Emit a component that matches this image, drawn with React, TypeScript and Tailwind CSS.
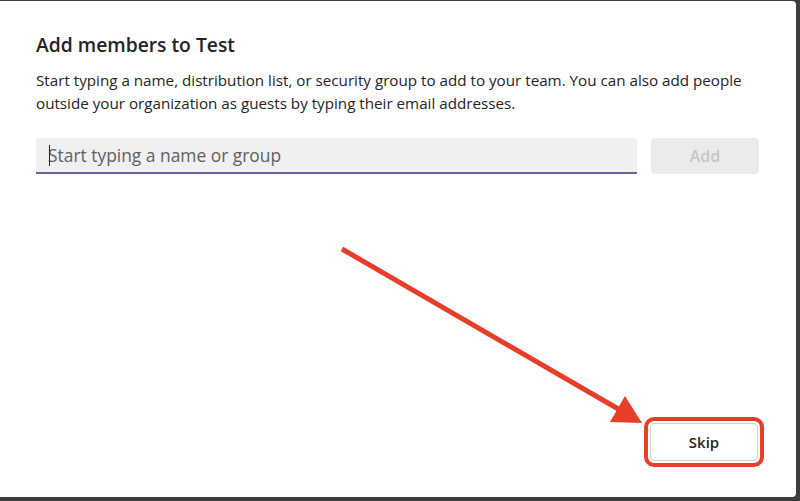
import React from "react";

export default function App() {
  return (
    <div
      className="w-[800px] h-[501px] bg-[#3d3d3d] pt-px overflow-hidden"
      style={{ fontFamily: '"Open Sans", "Noto Sans", sans-serif' }}
    >
      <div className="relative flex flex-col w-[796px] h-[496px] bg-white rounded-r-[4px] pl-[36px] pr-[32px] pt-[30px] pb-[30px]">
        <h1 className="text-[19.3px] leading-[28px] font-semibold text-[#252424]">
          Add members to Test
        </h1>
        <p className="mt-[10px] text-[15.2px] leading-[23px] text-[#252424] w-[715px]">
          Start typing a name, distribution list, or security group to add to your team. You can also add people outside your organization as guests by typing their email addresses.
        </p>
        <div className="mt-[23px] flex items-start gap-[14px]">
          <div className="relative w-[601px] h-[36px] bg-[#f0f0f0] rounded-t-[3px] border-b-2 border-[#6264a7] flex items-center pl-[12px]">
            <span className="absolute left-[13px] top-[7px] w-px h-[21px] bg-[#252424]" />
            <span className="text-[17.4px] text-[#616161]">Start typing a name or group</span>
          </div>
          <button className="w-[108px] h-[36px] rounded-[4px] bg-[#ebebeb] text-[16px] font-semibold text-[#c6c6c6]">
            Add
          </button>
        </div>

        <div className="flex-1" />

        <div className="flex justify-end">
          <div className="rounded-[10px] border-[4px] border-[#e63e28] p-[2px]">
            <button className="w-[108px] h-[38px] rounded-[4px] border border-[#d0d0d0] bg-white flex items-center justify-center text-[15px] font-semibold text-[#252424]">
              Skip
            </button>
          </div>
        </div>

        <svg className="absolute left-0 top-0 pointer-events-none" width="796" height="496" viewBox="0 1 796 496">
          <line x1="342" y1="249" x2="620" y2="410" stroke="#e63e28" strokeWidth="5" />
          <polygon points="642,423 610,422 625,396" fill="#e63e28" />
        </svg>
      </div>
    </div>
  );
}
